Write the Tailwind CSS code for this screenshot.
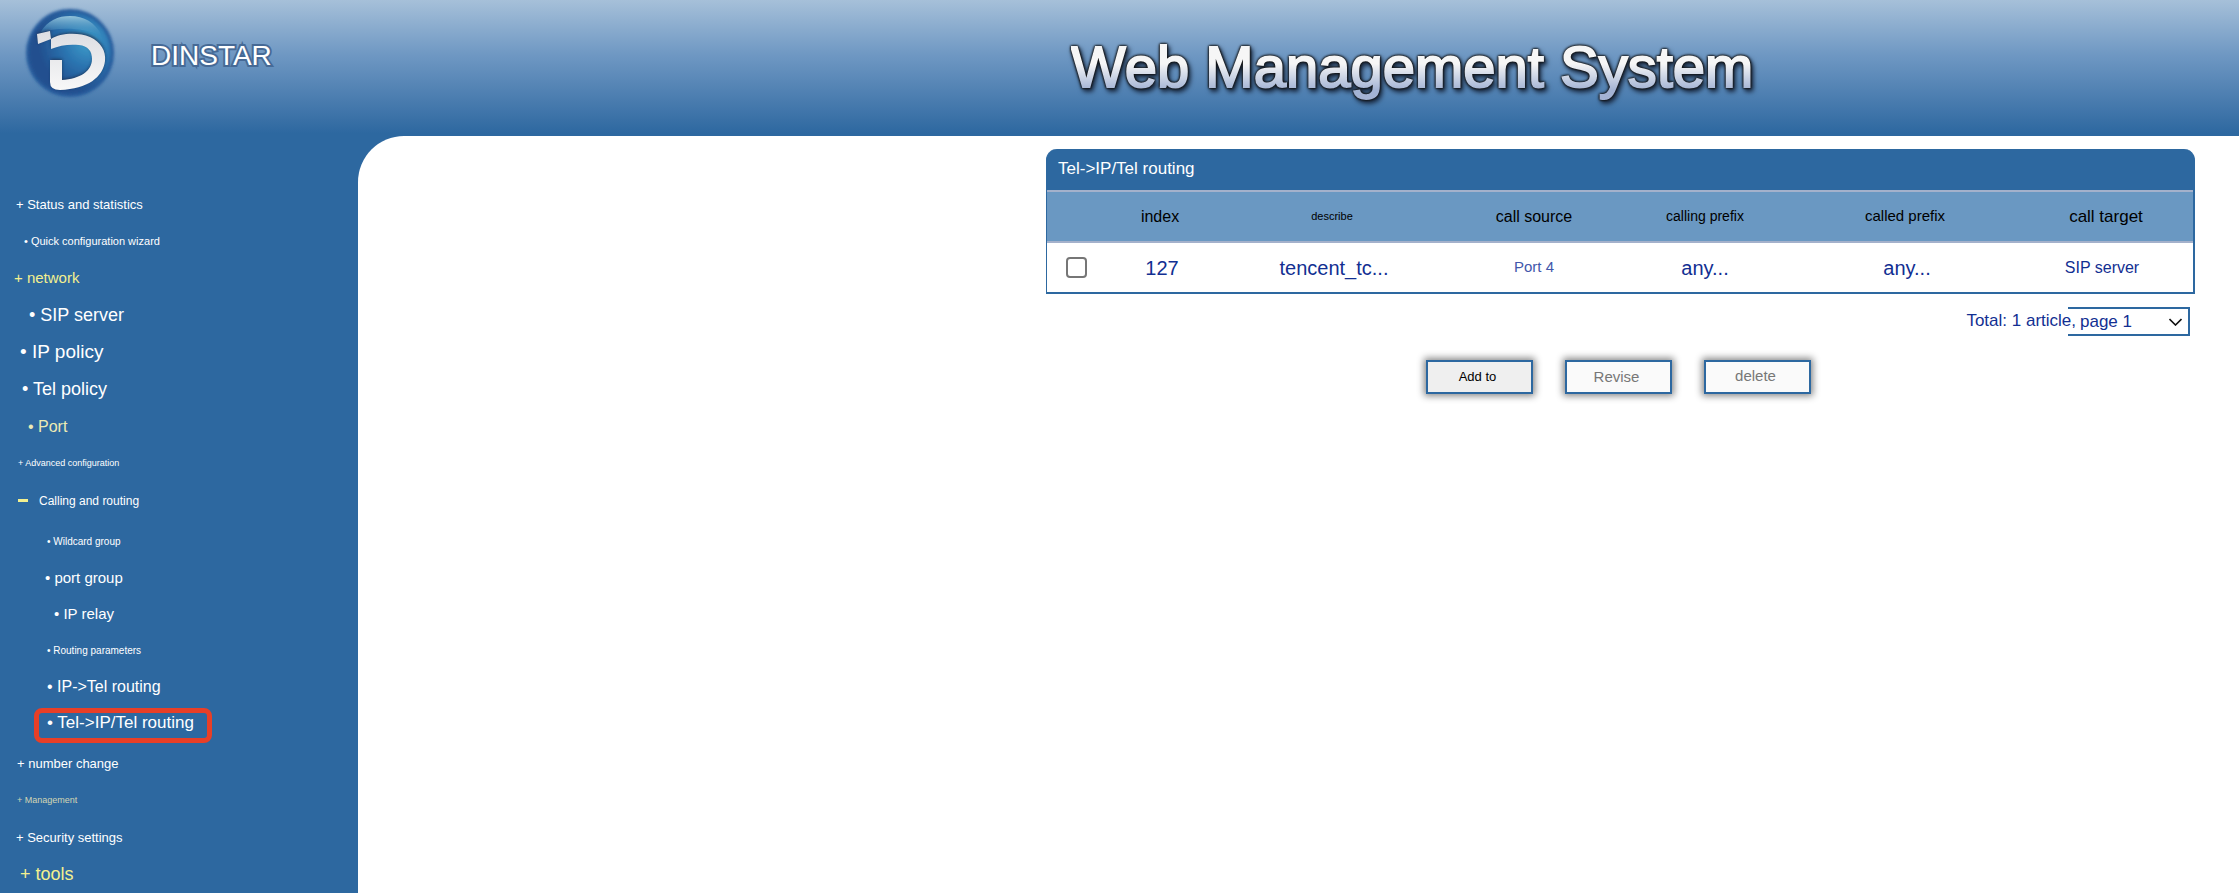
<!DOCTYPE html>
<html lang="en">
<head>
<meta charset="utf-8">
<title>Web Management System</title>
<script src="https://cdn.jsdelivr.net/npm/@tailwindcss/browser@4"></script>
</head>
<body class="flex min-h-screen flex-col bg-[#2d68a0] font-['Liberation_Sans',Arial,sans-serif]">
<header class="flex h-[136px] items-start bg-linear-to-b from-[#a6c0d9] from-0% via-[#6f98c3] via-40% to-[#2d68a0] to-98%">
  <div class="flex w-[1071px] shrink-0 items-start pl-5">
    <svg class="h-[104px] w-[100px]" viewBox="20 0 100 104" aria-hidden="true">
      <defs>
        <radialGradient id="ball" cx="0.72" cy="0.36" r="0.6"><stop offset="0" stop-color="#3f9fcc"/><stop offset="0.5" stop-color="#2b74b0"/><stop offset="1" stop-color="#22508f"/></radialGradient>
        <linearGradient id="shine" x1="0" y1="0" x2="0" y2="1"><stop offset="0" stop-color="#93c3da"/><stop offset="1" stop-color="#3f90c0" stop-opacity="0.1"/></linearGradient>
        <linearGradient id="metal" x1="0" y1="0" x2="0" y2="1"><stop offset="0" stop-color="#dcdde2"/><stop offset="1" stop-color="#f8f8f8"/></linearGradient>
        <filter id="soft" x="-20%" y="-20%" width="140%" height="140%"><feGaussianBlur stdDeviation="1.5"/></filter>
      </defs>
      <circle cx="70" cy="53" r="44" fill="#285c9c" filter="url(#soft)"/>
      <circle cx="70" cy="53" r="41" fill="url(#ball)" filter="url(#soft)"/>
      <path d="M40 33C48 20 58 16 70 16C84 16 95 22 102 36C86 28 58 26 40 33Z" fill="url(#shine)"/>
      <path d="M37 34L50 31L51 39C60 33 78 31 90 36C101 41 106 50 105 61C103 77 88 89 60 90Q51 90 51 82V60H62V80C80 79 92 71 93 59C93 51 88 45 79 44C70 43 60 44 51 48V39L38 44Z" fill="#1d3052" opacity="0.8" transform="translate(0 -1)" filter="url(#soft)"/>
      <path d="M37 34L50 31L51 39C60 33 78 32 90 37C101 42 106 51 105 61C103 77 88 89 60 90Q50 90 50 82V60H62V80C80 79 92 71 92 59C92 51 88 46 79 45C70 44 60 45 51 49V39L38 44Z" fill="url(#metal)"/>
    </svg>
    <span class="ml-[31px] mt-[40px] text-[28px] leading-[32px] text-white [paint-order:stroke] [-webkit-text-stroke:4px_#466a96]">DINSTAR</span>
  </div>
  <h1 class="mt-[34px] bg-linear-to-b from-[#f6f6f6] from-45% to-[#a3b3d4] to-85% bg-clip-text text-[58px] leading-[66px] whitespace-nowrap text-transparent [-webkit-text-stroke:2px_transparent] [filter:drop-shadow(0_0_1px_#111)_drop-shadow(0_0_1px_#111)_drop-shadow(2px_3px_2px_#1b2c44)]">Web Management System</h1>
</header>
<div class="flex flex-1">
  <nav class="w-[358px] shrink-0 pt-[50px] whitespace-nowrap text-white" aria-label="Main">
    <ul>
      <li class="flex h-[37px] items-center pl-4 text-[13px]"><a href="#">+ Status and statistics</a></li>
      <li class="flex h-[37px] items-center pl-6 text-[11px]"><a href="#">• Quick configuration wizard</a></li>
      <li class="flex h-[37px] items-center pl-[14px] text-[15px] text-[#f3f08f]"><a href="#">+ network</a></li>
      <li class="flex h-[37px] items-center pl-[29px] text-[18px]"><a href="#">• SIP server</a></li>
      <li class="flex h-[37px] items-center pl-5 text-[19px]"><a href="#">• IP policy</a></li>
      <li class="flex h-[37px] items-center pl-[22px] text-[18px]"><a href="#">• Tel policy</a></li>
      <li class="flex h-[37px] items-center pl-7 text-[16px] text-[#ecebb4]"><a href="#">• Port</a></li>
      <li class="flex h-[37px] items-center pl-[18px] text-[9px]"><a href="#">+ Advanced configuration</a></li>
      <li>
        <a href="#" class="flex h-[37px] items-center pl-[18px] text-[12px]"><span class="mr-[11px] h-[3px] w-[10px] bg-[#f3f08f]"></span>Calling and routing</a>
        <ul class="mt-1">
          <li class="flex h-[37px] items-center pl-[47px] text-[10px]"><a href="#">• Wildcard group</a></li>
          <li class="flex h-9 items-center pl-[45px] text-[15px]"><a href="#">• port group</a></li>
          <li class="flex h-9 items-center pl-[54px] text-[15px]"><a href="#">• IP relay</a></li>
          <li class="flex h-[37px] items-center pl-[47px] text-[10px]"><a href="#">• Routing parameters</a></li>
          <li class="flex h-9 items-center pl-[47px] text-[16px]"><a href="#">• IP-&gt;Tel routing</a></li>
          <li class="mt-0.5 mb-px flex h-[37px] items-center pl-[34px] text-[17px]"><a href="#" class="flex h-[35px] w-[178px] items-center rounded-lg border-[5px] border-[#e83f27] pb-[6px] pl-2" aria-current="page">• Tel-&gt;IP/Tel routing</a></li>
        </ul>
      </li>
      <li class="flex h-[37px] items-center pl-[17px] text-[13px]"><a href="#">+ number change</a></li>
      <li class="flex h-[37px] items-center pl-[17px] text-[9px] text-[#d3d6b4]"><a href="#">+ Management</a></li>
      <li class="flex h-[37px] items-center pl-4 text-[13px]"><a href="#">+ Security settings</a></li>
      <li class="flex h-[37px] items-center pl-5 text-[18px] text-[#f3f08f]"><a href="#">+ tools</a></li>
    </ul>
  </nav>
  <main class="min-w-0 flex-1 rounded-tl-[46px] bg-white pt-[13px] pr-11">
    <section class="ml-auto w-full max-w-[1149px]">
      <div class="rounded-t-[11px] border-2 border-t-0 border-l border-[#2d68a0] bg-[#2d68a0]">
        <h2 class="h-[41px] pl-[11px] text-[17px] leading-[40px] text-white">Tel-&gt;IP/Tel routing</h2>
        <table class="w-full table-fixed border-collapse text-center">
          <colgroup><col class="w-[58px]"><col class="w-[110px]"><col class="w-[234px]"><col class="w-[170px]"><col class="w-[172px]"><col class="w-[228px]"><col class="w-[174px]"></colgroup>
          <thead>
            <tr class="h-[51px] border-y-2 border-[#a4b1cb] bg-[#6a98c2] text-black">
              <th></th>
              <th class="text-[16px] font-normal">index</th>
              <th class="text-[11px] font-normal">describe</th>
              <th class="text-[16px] font-normal">call source</th>
              <th class="text-[14px] font-normal">calling prefix</th>
              <th class="text-[15px] font-normal">called prefix</th>
              <th class="text-[17px] font-normal">call target</th>
            </tr>
          </thead>
          <tbody>
            <tr class="h-[50px] bg-white text-[20px] text-[#122f92]">
              <td><input type="checkbox" aria-label="Select 127" class="mx-auto block size-[21px] appearance-none rounded-[4px] border-2 border-[#767676] bg-white"></td>
              <td class="pl-1">127</td>
              <td class="pl-1">tencent_tc...</td>
              <td class="text-[15px] text-[#4257ab]">Port 4</td>
              <td>any...</td>
              <td class="pl-1">any...</td>
              <td class="pr-2 text-[16px]">SIP server</td>
            </tr>
          </tbody>
        </table>
      </div>
      <div class="mt-[13px] mr-[5px] flex h-[29px] items-center justify-end text-[17px] text-[#122f92]">
        <label for="page" class="pb-[2px]">Total: 1 article,</label>
        <div class="relative -ml-2 h-full w-[122px]">
          <select id="page" class="h-full w-full appearance-none border-2 border-l-0 border-[#2d68a0] bg-transparent pb-1 pl-[12px]"><option>page 1</option></select>
          <svg class="pointer-events-none absolute top-[11px] right-[8px] h-[8px] w-[13px]" viewBox="0 0 13 8" fill="none" stroke="#111" stroke-width="1.6" aria-hidden="true"><path d="M0.500 1L6.500 7L12.500 1"/></svg>
        </div>
      </div>
      <div class="mt-6 flex justify-center gap-8 pr-1">
        <button class="h-[34px] w-[107px] border-2 border-[#2d68a0] bg-[#efefef] pr-1 text-[13px] text-black shadow-[0_0_7px_2px_#888]">Add to</button>
        <button class="h-[34px] w-[107px] border-2 border-[#2d68a0] bg-[#fafafa] pr-1 text-[15px] text-[#777] shadow-[0_0_7px_2px_#888]">Revise</button>
        <button class="h-[34px] w-[107px] border-2 border-[#2d68a0] bg-[#fafafa] pr-1 pb-[2px] text-[15px] text-[#777] shadow-[0_0_7px_2px_#888]">delete</button>
      </div>
    </section>
  </main>
</div>
</body>
</html>
